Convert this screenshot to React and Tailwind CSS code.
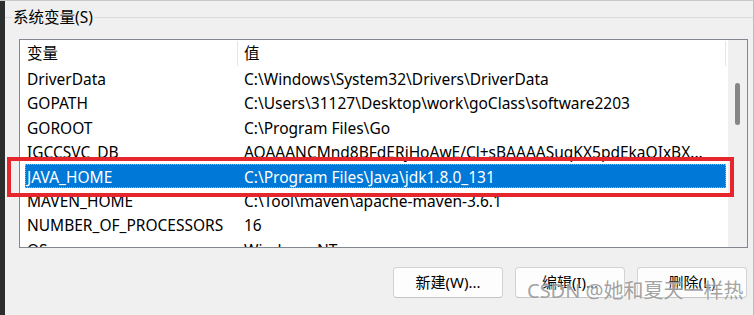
import React from "react";

const rows = [
  ["DriverData", "C:\\Windows\\System32\\Drivers\\DriverData"],
  ["GOPATH", "C:\\Users\\31127\\Desktop\\work\\goClass\\software2203"],
  ["GOROOT", "C:\\Program Files\\Go"],
  ["IGCCSVC_DB", "AQAAANCMnd8BFdERjHoAwE/Cl+sBAAAASuqKX5pdEkaOIxBX..."],
  ["JAVA_HOME", "C:\\Program Files\\Java\\jdk1.8.0_131", true],
  ["MAVEN_HOME", "C:\\Tool\\maven\\apache-maven-3.6.1"],
  ["NUMBER_OF_PROCESSORS", "16"],
  ["OS", "Windows_NT"],
];

const font = { fontFamily: '"Noto Sans", "Noto Sans CJK SC", sans-serif' };

function Btn({ children }) {
  return (
    <div className="w-[110px] h-[31px] flex items-center justify-center bg-[#fdfdfd] border border-[#d3d3d3] border-b-[#c4c4c4] rounded-[4px] text-[15px] text-black">
      {children}
    </div>
  );
}

export default function App() {
  return (
    <div
      className="relative w-[754px] h-[315px] overflow-hidden flex bg-[#f0f0f0] text-black border-t border-[#c9c9c9]"
      style={font}
    >
      <div className="w-[5px] shrink-0 bg-[#2b2d2e]" />
      <div className="flex-1 flex flex-col border-r border-[#bdbdbd]">
        {/* group header */}
        <div className="flex items-center h-[20px] mt-[6px]">
          <div className="w-[7px] h-px bg-[#dcdcdc]" />
          <span className="text-[15.5px] leading-[20px] px-px">系统变量(S)</span>
          <div className="flex-1 h-px bg-[#dcdcdc]" />
        </div>
        {/* list box */}
        <div className="ml-[14px] mt-[12px] w-[729px] h-[209px] border border-[#828790] bg-white flex overflow-hidden">
          <div className="flex-1 flex flex-col overflow-hidden">
            <div className="h-[26.5px] shrink-0 flex text-[15.5px]">
              <div className="w-[217px] pl-[7px] pt-[1px] flex items-center">变量</div>
              <div className="w-px my-[1px] bg-[#e5e5e5]" />
              <div className="flex-1 pl-[6px] pt-[1px] flex items-center">值</div>
              <div className="w-px my-[1px] bg-[#e5e5e5]" />
            </div>
            {rows.map(([k, v, sel]) => (
              <div
                key={k}
                className={
                  "h-[24.4px] shrink-0 ml-[5px] pt-[2px] flex items-center text-[15.5px] whitespace-nowrap " +
                  (sel ? "bg-[#0078d7] text-white outline outline-1 outline-dotted outline-[#f2a33a] -outline-offset-1" : "")
                }
              >
                <div className="w-[219px] pl-[2px] overflow-hidden">{k}</div>
                <div className="flex-1 overflow-hidden">{v}</div>
              </div>
            ))}
          </div>
          <div className="w-[21px] shrink-0 bg-[#f0f0f0] border-l-2 border-white relative">
            <div className="absolute left-[7px] top-[43px] w-[5px] h-[42px] rounded-full bg-[#868686]" />
          </div>
        </div>
        {/* buttons */}
        <div className="flex justify-end gap-[12px] mt-[19px] pr-[6px]">
          <Btn>新建(W)...</Btn>
          <Btn>编辑(I)...</Btn>
          <Btn>删除(L)</Btn>
        </div>
      </div>

      {/* red annotation box */}
      <div className="absolute left-[7px] top-[156px] w-[727px] h-[40px] border-4 border-[#e5262c]" />

      {/* watermark */}
      <div className="absolute left-[527px] top-[278px] text-[20px] leading-[24px] text-[#8a8a8a]/80 whitespace-nowrap [text-shadow:0_0_2px_#ffffff]">
        CSDN @她和夏天一样热
      </div>
    </div>
  );
}
